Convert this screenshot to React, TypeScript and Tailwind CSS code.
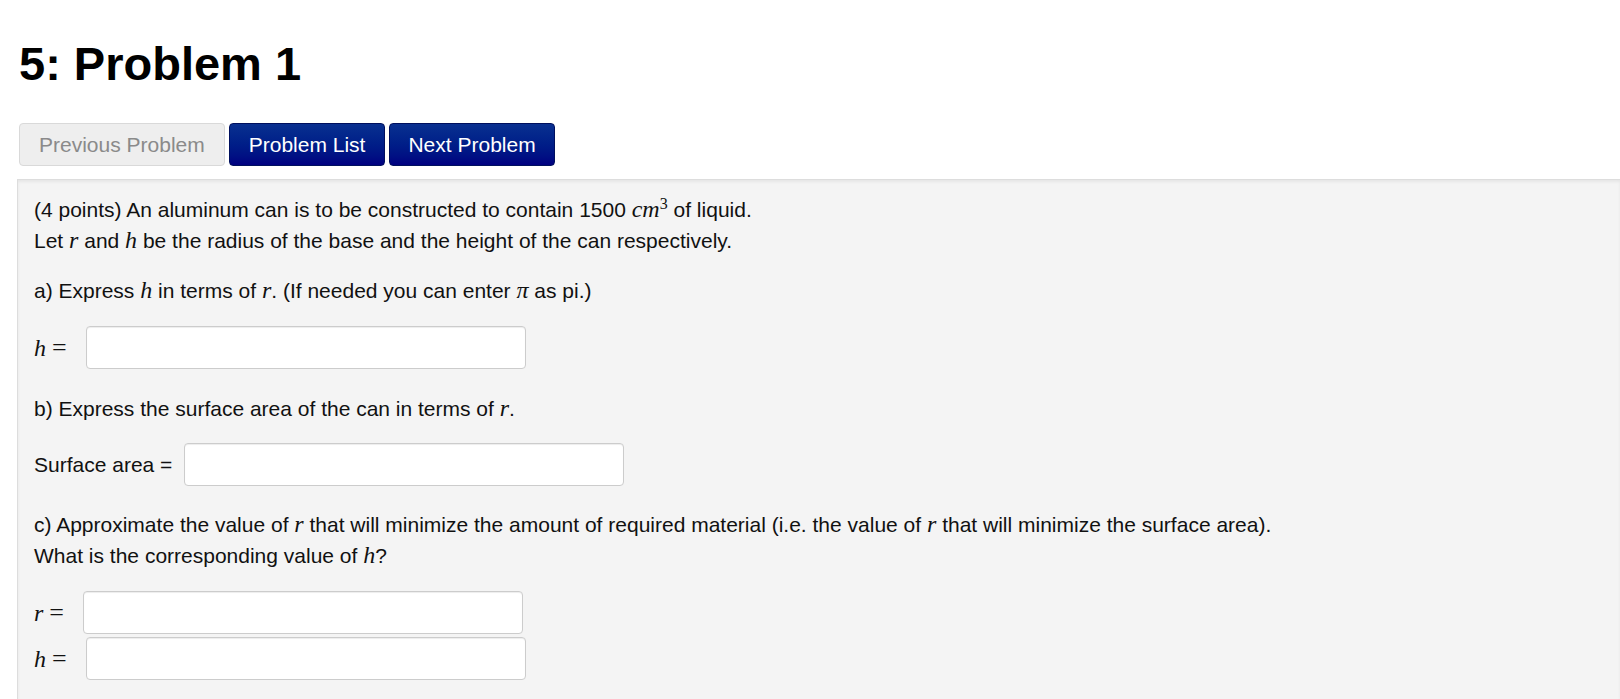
import React from "react";

const serif = '"Liberation Serif", "DejaVu Serif", serif';

function M({ children }: { children: React.ReactNode }) {
  return (
    <span className="italic text-[24px] leading-none" style={{ fontFamily: serif }}>
      {children}
    </span>
  );
}

function Eq() {
  return (
    <span className="ml-[6px] text-[26px] leading-none" style={{ fontFamily: serif }}>
      =
    </span>
  );
}

function AnswerRow({ label, math }: { label: React.ReactNode; math?: boolean }) {
  return (
    <div className="flex items-center">
      <div className={math ? "flex items-center pr-[19px]" : "pr-[12px]"}>{label}</div>
      <input
        type="text"
        className="h-[43px] w-[440px] rounded-[4px] border border-[#cccccc] bg-white px-2 shadow-[inset_0_1px_1px_rgba(0,0,0,0.075)] outline-none"
      />
    </div>
  );
}

export default function App() {
  return (
    <div className="min-h-screen bg-white text-[#111111]" style={{ fontFamily: '"Liberation Sans", Arial, sans-serif' }}>
      <div className="pl-[19px] pt-[38px]">
        <h1 className="text-[47px] font-bold leading-[52px] text-black">5: Problem 1</h1>

        <div className="mt-[33px] flex gap-[4px]">
          <button className="h-[43px] rounded-[4px] border border-[#d9d9d9] bg-[#eeeeee] px-[19px] text-[21px] text-[#8a8a8a]">
            Previous Problem
          </button>
          <button className="h-[43px] rounded-[4px] border border-[#00105e] bg-gradient-to-b from-[#0a3090] to-[#000080] px-[19px] text-[21px] text-white">
            Problem List
          </button>
          <button className="h-[43px] rounded-[4px] border border-[#00105e] bg-gradient-to-b from-[#0a3090] to-[#000080] px-[18px] text-[21px] text-white">
            Next Problem
          </button>
        </div>
      </div>

      <div className="ml-[17px] mt-[13px] min-h-[200px] border-l border-t border-[#dddddd] bg-[#f4f4f4] pb-[40px] pl-[16px] pt-[14px] text-[21px] leading-[31px] shadow-[0_2px_3px_rgba(0,0,0,0.06)_inset]">
        <p>
          (4 points) An aluminum can is to be constructed to contain 1500{" "}
          <M>cm</M>
          <sup className="text-[16px]" style={{ fontFamily: serif }}>3</sup> of liquid.
          <br />
          Let <M>r</M> and <M>h</M> be the radius of the base and the height of the can respectively.
        </p>

        <p className="mt-[19px]">
          a) Express <M>h</M> in terms of <M>r</M>. (If needed you can enter <M>π</M> as pi.)
        </p>

        <div className="mt-[20px]">
          <AnswerRow math label={<><M>h</M><Eq /></>} />
        </div>

        <p className="mt-[24px]">
          b) Express the surface area of the can in terms of <M>r</M>.
        </p>

        <div className="mt-[19px]">
          <AnswerRow label="Surface area =" />
        </div>

        <p className="mt-[23px]">
          c) Approximate the value of <M>r</M> that will minimize the amount of required material (i.e. the value of <M>r</M> that will minimize the surface area).
          <br />
          What is the corresponding value of <M>h</M>?
        </p>

        <div className="mt-[20px] flex flex-col gap-[3px]">
          <AnswerRow math label={<><M>r</M><Eq /></>} />
          <AnswerRow math label={<><M>h</M><Eq /></>} />
        </div>
      </div>
    </div>
  );
}
